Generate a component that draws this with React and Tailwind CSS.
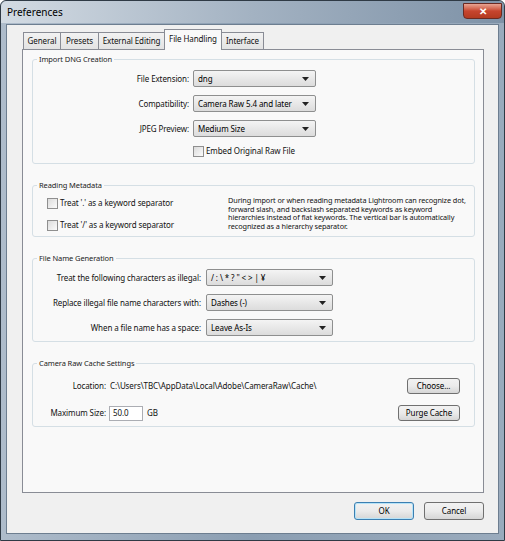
import React from 'react';

const font = { fontFamily: '"Noto Sans", "Open Sans", sans-serif' };

const Select = ({ value, width }) => (
  <div
    className={`${width} h-[17px] flex items-center justify-between rounded-[2px] border border-[#8e8f8f] bg-gradient-to-b from-[#f4f4f4] to-[#dcdcdc] pl-[4px] pr-[6px] text-[8px] leading-none text-black`}
  >
    <span>{value}</span>
    <svg width="7" height="4" viewBox="0 0 7 4"><path d="M0 0h7L3.5 4z" fill="#222" /></svg>
  </div>
);

const Checkbox = () => (
  <div className="w-[11px] h-[11px] border border-[#8f8f8f] bg-gradient-to-br from-[#dcdcdc] to-[#fbfbfb] shrink-0" />
);

const Button = ({ children, width, height = 'h-[16px]', primary }) => (
  <div
    className={`${width} ${height} flex items-center justify-center rounded-[3px] border ${
      primary ? 'border-[#3c7fb1] shadow-[inset_0_0_0_1px_#b6e3f8]' : 'border-[#707070]'
    } bg-gradient-to-b from-[#f2f2f2] via-[#ebebeb] to-[#d6d6d6] text-[8px] text-black`}
  >
    {children}
  </div>
);

const Group = ({ title, className, children }) => (
  <fieldset className={`rounded-[3px] border border-[#d5dfe5] ${className}`}>
    <legend className="ml-[4px] px-[2px] text-[7.5px] leading-[10px] text-[#222]">{title}</legend>
    {children}
  </fieldset>
);

const tabs = [
  { t: 'General', w: 'w-[38px]' },
  { t: 'Presets', w: 'w-[39px]' },
  { t: 'External Editing', w: 'w-[67px]' },
  { t: 'File Handling', w: 'w-[58px]', active: true },
  { t: 'Interface', w: 'w-[43px]' },
];

export default function App() {
  return (
    <div
      className="w-[505px] h-[541px] flex flex-col bg-gradient-to-r from-[#aebccb] via-[#8b9eb2] to-[#9aabbd] border border-[#2f3a45] rounded-t-[6px]"
      style={font}
    >
      <div className="h-[22px] flex items-center justify-between pl-[6px] pr-[2px] bg-gradient-to-r from-[#d3dbe3] via-[#a3b2c2] to-[#7e92a7] rounded-t-[6px]">
        <span className="text-[10px] text-black">Preferences</span>
        <div className="w-[39px] h-[16px] -mt-[3px] flex items-center justify-center rounded-b-[4px] border border-[#6b2a22] bg-gradient-to-b from-[#e8a493] via-[#c7452e] to-[#b33a20]">
          <span className="text-white text-[10px] font-bold leading-none">✕</span>
        </div>
      </div>

      <div className="flex-1 mx-[5px] mb-[6px] mt-[1px] border border-[#6d7e90] bg-[#f0f0f0] flex flex-col pl-[15px] pr-[14px] pt-[4px] text-[8px] text-[#111] tracking-[-0.1px]">
        <div className="flex items-end h-[20px] pl-[1px]">
          {tabs.map(({ t, w, active }) => (
            <div
              key={t}
              className={`${w} flex items-center justify-center border border-b-0 border-[#898c95] -ml-[1px] first:ml-0 ${
                active
                  ? 'h-[21px] bg-[#f9f9f9] relative z-10 -mb-[1px] pb-[2px]'
                  : 'h-[17px] bg-gradient-to-b from-[#f2f2f2] to-[#e3e3e3]'
              }`}
            >
              {t}
            </div>
          ))}
        </div>

        <div className="h-[444px] border border-[#898c95] bg-[#f9f9f9] pl-[9px] pr-[8px] pt-[4px] flex flex-col">
          <Group title="Import DNG Creation" className="h-[110px] pt-[6px]">
            <div className="grid grid-cols-[156px_123px] gap-x-[4px] gap-y-[8px] items-center">
              <span className="text-right">File Extension:</span>
              <Select value="dng" width="w-[123px]" />
              <span className="text-right">Compatibility:</span>
              <Select value="Camera Raw 5.4 and later" width="w-[123px]" />
              <span className="text-right">JPEG Preview:</span>
              <Select value="Medium Size" width="w-[123px]" />
              <span />
              <div className="flex items-center gap-[2px]">
                <Checkbox />
                <span>Embed Original Raw File</span>
              </div>
            </div>
          </Group>

          <Group title="Reading Metadata" className="mt-[16px] h-[57px]">
            <div className="flex pl-[14px] pt-[2px]">
              <div className="w-[181px] flex flex-col gap-[10px] pt-[5px]">
                <div className="flex items-center gap-[2px]">
                  <Checkbox />
                  <span>Treat '.' as a keyword separator</span>
                </div>
                <div className="flex items-center gap-[2px]">
                  <Checkbox />
                  <span>Treat '/' as a keyword separator</span>
                </div>
              </div>
              <p className="pt-[4px] text-[7.3px] leading-[8.5px] whitespace-nowrap">
                During import or when reading metadata Lightroom can recognize dot,
                <br />
                forward slash, and backslash separated keywords as keyword
                <br />
                hierarchies instead of flat keywords. The vertical bar is automatically
                <br />
                recognized as a hierarchy separator.
              </p>
            </div>
          </Group>

          <Group title="File Name Generation" className="mt-[16px] h-[89px] pt-[6px]">
            <div className="grid grid-cols-[168px_127px] gap-x-[5px] gap-y-[8px] items-center">
              <span className="text-right">Treat the following characters as illegal:</span>
              <Select value={'/ : \\ * ? " < > | ¥'} width="w-[127px]" />
              <span className="text-right">Replace illegal file name characters with:</span>
              <Select value="Dashes (-)" width="w-[127px]" />
              <span className="text-right">When a file name has a space:</span>
              <Select value="Leave As-Is" width="w-[127px]" />
            </div>
          </Group>

          <Group title="Camera Raw Cache Settings" className="mt-[16px] h-[69px] pt-[10px]">
            <div className="flex flex-col gap-[11px] pr-[14px]">
              <div className="flex items-center">
                <span className="w-[73px] text-right">Location:</span>
                <span className="ml-[4px] flex-1">C:\Users\TBC\AppData\Local\Adobe\CameraRaw\Cache\</span>
                <Button width="w-[53px]">Choose...</Button>
              </div>
              <div className="flex items-center">
                <span className="w-[73px] text-right">Maximum Size:</span>
                <div className="ml-[3px] w-[34px] h-[15px] border border-[#abadb3] bg-white flex items-center pl-[3px]">50.0</div>
                <span className="ml-[4px] flex-1">GB</span>
                <Button width="w-[62px]">Purge Cache</Button>
              </div>
            </div>
          </Group>
        </div>

        <div className="flex justify-end gap-[10px] mt-[9px]">
          <Button width="w-[60px]" height="h-[18px]" primary>OK</Button>
          <Button width="w-[60px]" height="h-[18px]">Cancel</Button>
        </div>
      </div>
    </div>
  );
}
